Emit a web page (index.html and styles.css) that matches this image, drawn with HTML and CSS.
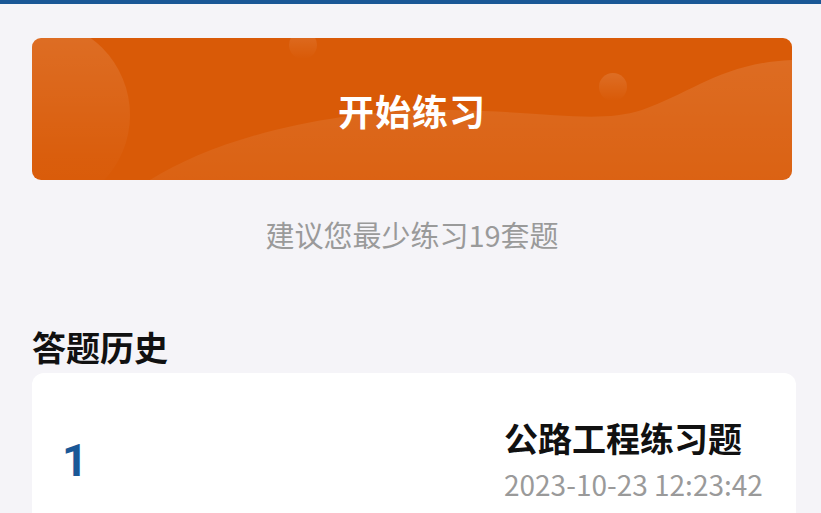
FILE: index.html
```html
<!DOCTYPE html>
<html lang="zh-CN">
<head>
<meta charset="utf-8">
<title>练习</title>
<link rel="stylesheet" href="styles.css">
</head>
<body>
<div class="topbar"></div>
<main class="page">
  <div class="start-card">
    <svg class="start-decor" width="760" height="142" viewBox="0 0 760 142" aria-hidden="true">
      <defs>
        <linearGradient id="gCircle" x1="0" y1="0" x2="0" y2="1">
          <stop offset="0" stop-color="#ffffff" stop-opacity="0.13"/>
          <stop offset="0.75" stop-color="#ffffff" stop-opacity="0.02"/>
          <stop offset="1" stop-color="#ffffff" stop-opacity="0"/>
        </linearGradient>
        <linearGradient id="gWave" x1="0" y1="0" x2="0" y2="1">
          <stop offset="0" stop-color="#ffffff" stop-opacity="0.11"/>
          <stop offset="1" stop-color="#ffffff" stop-opacity="0.05"/>
        </linearGradient>
        <linearGradient id="gDot" x1="0" y1="0" x2="0" y2="1">
          <stop offset="0" stop-color="#ffffff" stop-opacity="0.12"/>
          <stop offset="1" stop-color="#ffffff" stop-opacity="0"/>
        </linearGradient>
      </defs>
      <circle cx="3" cy="77" r="95" fill="url(#gCircle)"/>
      <circle cx="271" cy="7" r="14" fill="url(#gDot)"/>
      <circle cx="581" cy="49" r="14" fill="url(#gDot)"/>
      <path d="M118,142 C185,100 300,70 420,72 C520,74 565,86 610,72 C660,55 690,25 760,22 L760,142 Z" fill="url(#gWave)"/>
    </svg>
    <span class="start-label">开始练习</span>
  </div>
  <p class="hint">建议您最少练习19套题</p>
  <h2 class="section-title">答题历史</h2>
  <div class="history-card">
    <span class="history-index">1</span>
    <div class="history-info">
      <div class="history-name">公路工程练习题</div>
      <div class="history-time">2023-10-23 12:23:42</div>
    </div>
  </div>
</main>
</body>
</html>
```

FILE: styles.css
```css
html, body {
  margin: 0;
  padding: 0;
}
body {
  background: #f5f4f8;
  font-family: "Noto Sans CJK SC", "Noto Sans", sans-serif;
  overflow: hidden;
}
.topbar {
  height: 4px;
  background: #1a5796;
}
.page {
  padding: 34px 0 0 32px;
  display: flex;
  flex-direction: column;
}
.start-card {
  position: relative;
  width: 760px;
  height: 142px;
  border-radius: 9px;
  background: #d95a07;
  overflow: hidden;
  display: flex;
  align-items: center;
  justify-content: center;
}
.start-decor {
  position: absolute;
  left: 0;
  top: 0;
}
.start-label {
  position: relative;
  color: #ffffff;
  font-size: 36px;
  font-weight: 700;
  line-height: 48px;
  letter-spacing: 1px;
  margin-top: 2px;
}
.hint {
  margin: 34px 0 0;
  width: 760px;
  text-align: center;
  color: #9a9a9a;
  font-size: 29px;
  line-height: 40px;
}
.section-title {
  margin: 71px 0 0;
  font-size: 34px;
  font-weight: 700;
  line-height: 44px;
  color: #111111;
}
.history-card {
  margin-top: 4px;
  width: 764px;
  box-sizing: border-box;
  background: #ffffff;
  border-radius: 12px;
  padding: 41px 22px 30px 30px;
  display: flex;
  align-items: center;
  justify-content: space-between;
}
.history-index {
  font-family: Roboto, "Noto Sans", sans-serif;
  font-size: 45px;
  font-weight: 700;
  color: #1a5796;
  line-height: 48px;
  margin-top: 4px;
}
.history-info {
  display: flex;
  flex-direction: column;
  width: 270px;
}
.history-name {
  font-size: 34px;
  font-weight: 700;
  line-height: 48px;
  color: #111111;
  white-space: nowrap;
}
.history-time {
  margin-top: 2px;
  font-size: 28px;
  line-height: 40px;
  color: #9a9a9a;
  white-space: nowrap;
}
```
